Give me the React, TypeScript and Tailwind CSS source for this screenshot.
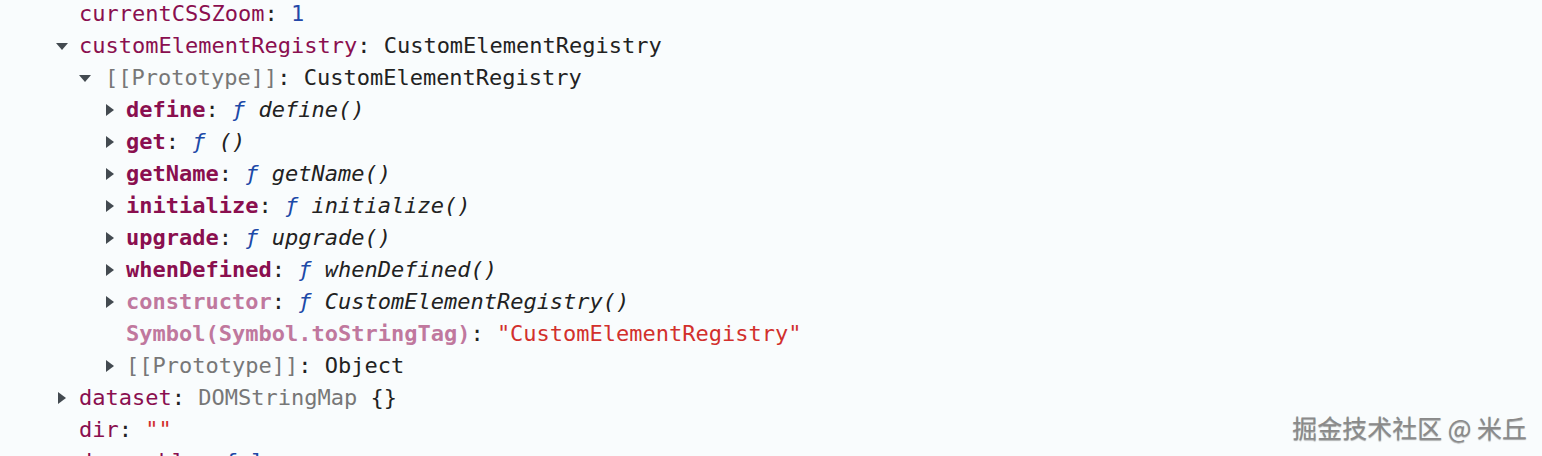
import React from "react"

type Part = { t: string; c: string }
type Row = { level: 0 | 1 | 2; arrow?: "down" | "right"; parts: Part[] }

const KEY = "text-[#8a0f4f]"
const KEYB = "text-[#8a0f4f] font-bold"
const DIM = "text-[#c0789e] font-bold"
const PUN = "text-[#222]"
const GRAY = "text-[#777]"
const FN = "text-[#1d4aa8] italic"
const IT = "text-[#222] italic"

const rows: Row[] = [
  { level: 0, parts: [{ t: "currentCSSZoom", c: KEY }, { t: ": ", c: PUN }, { t: "1", c: "text-[#2447a8]" }] },
  { level: 0, arrow: "down", parts: [{ t: "customElementRegistry", c: KEY }, { t: ": CustomElementRegistry", c: PUN }] },
  { level: 1, arrow: "down", parts: [{ t: "[[Prototype]]", c: GRAY }, { t: ": CustomElementRegistry", c: PUN }] },
  { level: 2, arrow: "right", parts: [{ t: "define", c: KEYB }, { t: ": ", c: PUN }, { t: "ƒ ", c: FN }, { t: "define()", c: IT }] },
  { level: 2, arrow: "right", parts: [{ t: "get", c: KEYB }, { t: ": ", c: PUN }, { t: "ƒ ", c: FN }, { t: "()", c: IT }] },
  { level: 2, arrow: "right", parts: [{ t: "getName", c: KEYB }, { t: ": ", c: PUN }, { t: "ƒ ", c: FN }, { t: "getName()", c: IT }] },
  { level: 2, arrow: "right", parts: [{ t: "initialize", c: KEYB }, { t: ": ", c: PUN }, { t: "ƒ ", c: FN }, { t: "initialize()", c: IT }] },
  { level: 2, arrow: "right", parts: [{ t: "upgrade", c: KEYB }, { t: ": ", c: PUN }, { t: "ƒ ", c: FN }, { t: "upgrade()", c: IT }] },
  { level: 2, arrow: "right", parts: [{ t: "whenDefined", c: KEYB }, { t: ": ", c: PUN }, { t: "ƒ ", c: FN }, { t: "whenDefined()", c: IT }] },
  { level: 2, arrow: "right", parts: [{ t: "constructor", c: DIM }, { t: ": ", c: PUN }, { t: "ƒ ", c: FN }, { t: "CustomElementRegistry()", c: IT }] },
  { level: 2, parts: [{ t: "Symbol(Symbol.toStringTag)", c: DIM }, { t: ": ", c: PUN }, { t: "\"CustomElementRegistry\"", c: "text-[#d2302c]" }] },
  { level: 2, arrow: "right", parts: [{ t: "[[Prototype]]", c: GRAY }, { t: ": Object", c: PUN }] },
  { level: 0, arrow: "right", parts: [{ t: "dataset", c: KEY }, { t: ": ", c: PUN }, { t: "DOMStringMap", c: GRAY }, { t: " {}", c: PUN }] },
  { level: 0, parts: [{ t: "dir", c: KEY }, { t: ": ", c: PUN }, { t: "\"\"", c: "text-[#d2302c]" }] },
  { level: 0, parts: [{ t: "draggable", c: KEY }, { t: ": ", c: PUN }, { t: "false", c: "text-[#1d4aa8]" }] },
]

const indent = ["pl-[50px]", "pl-[73px]", "pl-[98px]"]
const gap = ["mr-[5px]", "mr-[8px]", "mr-[4px]"]

function Arrow({ dir }: { dir?: "down" | "right" }) {
  if (dir === "down")
    return <span className="block w-0 h-0 border-l-[6.5px] border-r-[6.5px] border-t-[7px] border-l-transparent border-r-transparent border-t-[#434a50]" />
  if (dir === "right")
    return <span className="block w-0 h-0 border-t-[6.5px] border-b-[6.5px] border-l-[8px] border-t-transparent border-b-transparent border-l-[#434a50]" />
  return null
}

export default function App() {
  return (
    <div className="relative w-[1542px] h-[456px] overflow-hidden bg-[#f9fcfd]">
      <div className="-mt-[2px] font-['DejaVu_Sans_Mono',monospace] text-[22px] leading-[32px] whitespace-pre">
        {rows.map((r, i) => (
          <div key={i} className={`flex items-center h-[32px] ${indent[r.level]}`}>
            <span className={`flex items-center justify-center w-[24px] h-[32px] ${gap[r.level]}`}>
              <Arrow dir={r.arrow} />
            </span>
            <span>
              {r.parts.map((p, j) => (
                <span key={j} className={p.c}>{p.t}</span>
              ))}
            </span>
          </div>
        ))}
      </div>
      <div className="absolute right-[15px] top-[410px] font-['Noto_Sans_CJK_SC',sans-serif] text-[25px] leading-[34px] text-[#8a8a8a] [text-shadow:0_1px_1px_rgba(0,0,0,0.35)] whitespace-pre">
        掘金技术社区 @ 米丘
      </div>
    </div>
  )
}
